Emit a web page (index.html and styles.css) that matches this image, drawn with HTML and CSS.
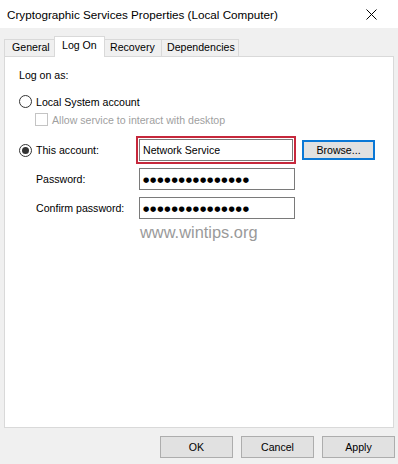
FILE: index.html
```html
<!DOCTYPE html>
<html>
<head>
<meta charset="utf-8">
<link rel="stylesheet" href="styles.css">
</head>
<body>
<div class="window">
  <div class="titlebar">
    <span class="title">Cryptographic Services Properties (Local Computer)</span>
    <span class="close"><svg width="11" height="11" viewBox="0 0 11 11"><path d="M0.5 0.5L10.5 10.5M10.5 0.5L0.5 10.5" stroke="#000" stroke-width="1" fill="none"/></svg></span>
  </div>
  <div class="main">
    <div class="tabs">
      <div class="tab first">General</div>
      <div class="tab active">Log On</div>
      <div class="tab">Recovery</div>
      <div class="tab">Dependencies</div>
    </div>
    <div class="panel">
      <div class="logon-label">Log on as:</div>
      <div class="radio-row">
        <span class="radio"></span><span>Local System account</span>
      </div>
      <div class="check-row">
        <span class="checkbox"></span><span class="disabled">Allow service to interact with desktop</span>
      </div>
      <div class="account-grid">
        <div class="radio-row inline"><span class="radio checked"></span><span>This account:</span></div>
        <div class="field highlighted">Network Service</div>
        <div class="browse">Browse...</div>
        <div class="sub-label">Password:</div>
        <div class="field dots">●●●●●●●●●●●●●●●</div>
        <div></div>
        <div class="sub-label">Confirm password:</div>
        <div class="field dots">●●●●●●●●●●●●●●●</div>
        <div></div>
      </div>
      <div class="watermark">www.wintips.org</div>
    </div>
    <div class="footer">
      <div class="btn">OK</div>
      <div class="btn">Cancel</div>
      <div class="btn">Apply</div>
    </div>
  </div>
</div>
</body>
</html>
```
FILE: styles.css
```css
* { box-sizing: border-box; }
html, body { margin: 0; padding: 0; }
body {
  width: 398px;
  height: 464px;
  overflow: hidden;
  background: #f0f0f0;
  font-family: "Liberation Sans", Arial, sans-serif;
  font-size: 10.6px;
  color: #000;
}
.titlebar {
  height: 28px;
  background: #fff;
  display: flex;
  align-items: center;
  padding-left: 7px;
}
.title {
  font-family: "Liberation Sans", Arial, sans-serif;
  font-size: 11.7px;
  color: #000;
  padding-top: 1px;
}
.close {
  margin-left: auto;
  width: 30px;
  display: flex;
  justify-content: flex-start;
  margin-right: 2px;
}
.close svg { display: block; }
.main {
  padding: 8px 0 0 4px;
}
.tabs {
  display: flex;
  align-items: flex-end;
  height: 20px;
}
.tab {
  height: 17px;
  border: 1px solid #d9d9d9;
  border-bottom: none;
  border-left: none;
  background: #f0f0f0;
  line-height: 15px;
  padding-left: 5px;
}
.tab.first { border-left: 1px solid #d9d9d9; width: 51px; padding-left: 7px; }
.tab.active {
  height: 21px;
  margin-bottom: -1px;
  margin-left: -1px;
  border-left: 1px solid #d9d9d9;
  background: #fff;
  position: relative;
  z-index: 1;
  width: 51px;
  padding-left: 7px;
  line-height: 17px;
}
.tab:nth-child(3) { width: 57px; }
.tab:nth-child(4) { width: 77px; }
.panel {
  width: 390px;
  height: 372px;
  background: #fff;
  border: 1px solid #d9d9d9;
  padding: 12px 0 0 14px;
}
.logon-label { line-height: 13px; }
.radio-row {
  display: flex;
  align-items: center;
  margin-top: 13px;
  height: 13px;
  gap: 4px;
}
.radio-row.inline { margin-top: 0; height: 22px; }
.radio {
  width: 13px;
  height: 13px;
  border: 1px solid #333;
  border-radius: 50%;
  background: #fff;
  display: flex;
  align-items: center;
  justify-content: center;
  flex: none;
}
.radio.checked::after {
  content: "";
  width: 7px;
  height: 7px;
  border-radius: 50%;
  background: #333;
}
.check-row {
  display: flex;
  align-items: center;
  gap: 4px;
  margin-top: 5px;
  margin-left: 16px;
  height: 13px;
}
.checkbox {
  width: 13px;
  height: 13px;
  border: 1px solid #c4c4c4;
  background: #fff;
  flex: none;
}
.disabled { color: #9f9f9f; }
.account-grid {
  margin-top: 13px;
  display: grid;
  grid-template-columns: 120px 154px 82px;
  grid-auto-rows: 22px;
  row-gap: 7px;
  column-gap: 0;
  align-items: center;
}
.sub-label { padding-left: 17px; }
.field {
  height: 22px;
  border: 1px solid #7a7a7a;
  background: #fff;
  padding-left: 3px;
  display: flex;
  align-items: center;
  width: 156px;
}
.field.highlighted {
  width: 154px;
  outline: 2px solid #c6283c;
  outline-offset: 1px;
}
.dots {
  font-family: "DejaVu Sans", sans-serif;
  font-size: 7.2px;
  letter-spacing: 0.85px;
  padding-left: 3px;
}
.browse {
  justify-self: end;
  width: 73px;
  height: 20px;
  border: 2px solid #0a78d6;
  background: #e1e1e1;
  display: flex;
  align-items: center;
  justify-content: center;
}
.watermark {
  margin-top: 4px;
  margin-left: 121px;
  font-family: "Liberation Sans", Arial, sans-serif;
  font-size: 16.4px;
  line-height: 18px;
  color: #9a9a9a;
}
.footer {
  display: flex;
  justify-content: flex-end;
  gap: 8px;
  margin-top: 8px;
  padding-right: 3px;
}
.btn {
  width: 73px;
  height: 22px;
  border: 1px solid #adadad;
  background: #e1e1e1;
  display: flex;
  align-items: center;
  justify-content: center;
}
```
